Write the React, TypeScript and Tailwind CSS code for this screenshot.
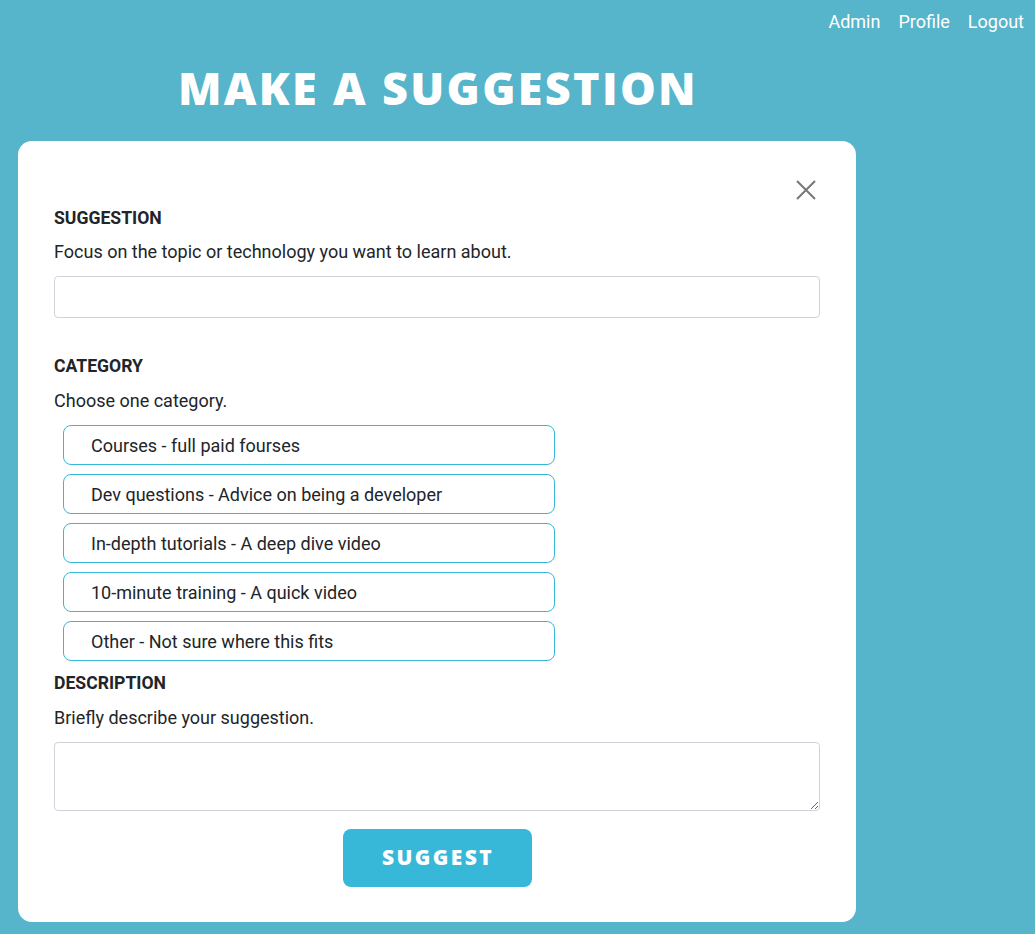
const categories = [
  'Courses - full paid fourses',
  'Dev questions - Advice on being a developer',
  'In-depth tutorials - A deep dive video',
  '10-minute training - A quick video',
  'Other - Not sure where this fits',
];

export default function App() {
  return (
    <div className="min-h-[934px] bg-[#56b4cb] font-['Roboto',sans-serif] text-[#212529]">
      <nav className="flex justify-end gap-[18px] pr-[11px] pt-[10px] text-[18px] leading-[24px] text-white">
        <a>Admin</a>
        <a>Profile</a>
        <a>Logout</a>
      </nav>
      <div className="ml-[18px] w-[838px] pb-[12px]">
        <h1 className="mt-[26px] pl-[2px] text-center font-['Open_Sans',sans-serif] text-[45px] font-extrabold leading-[56px] tracking-[2.3px] text-white">
          MAKE A SUGGESTION
        </h1>
        <div className="mt-[25px] rounded-[14px] bg-white px-[36px] pb-[35px] pt-[36px]">
          <div className="flex h-[26px] items-center justify-end pr-[4px]">
            <svg width="20" height="20" viewBox="0 0 20 20" className="text-[#777]">
              <path d="M1 1L19 19M19 1L1 19" stroke="currentColor" strokeWidth="2" fill="none" />
            </svg>
          </div>
          <label className="mt-[3px] block text-[17.6px] font-bold leading-[24px]">SUGGESTION</label>
          <p className="mt-[10px] text-[18px] leading-[24px]">Focus on the topic or technology you want to learn about.</p>
          <input className="mt-[12px] block h-[42px] w-[766px] rounded-[4px] border border-[#ced4da] px-3" />

          <label className="mt-[36px] block text-[17.6px] font-bold leading-[24px]">CATEGORY</label>
          <p className="mt-[11px] text-[18px] leading-[24px]">Choose one category.</p>
          <div className="mt-[12px] flex flex-col gap-[9px] pl-[9px]">
            {categories.map((c) => (
              <div
                key={c}
                className="flex h-[40px] w-[492px] items-center rounded-[8px] border border-[#38b8d8] pl-[27px] text-[18px]"
              >
                {c}
              </div>
            ))}
          </div>

          <label className="mt-[10px] block text-[17.6px] font-bold leading-[24px]">DESCRIPTION</label>
          <p className="mt-[11px] text-[18px] leading-[24px]">Briefly describe your suggestion.</p>
          <textarea className="mt-[12px] block h-[69px] w-[766px] rounded-[4px] border border-[#ced4da] px-3" />

          <div className="mt-[18px] flex justify-center">
            <button className="h-[58px] w-[189px] rounded-[8px] bg-[#38b8d8] pl-[2px] font-['Open_Sans',sans-serif] text-[21px] font-extrabold tracking-[2.4px] text-white">
              SUGGEST
            </button>
          </div>
        </div>
      </div>
    </div>
  );
}
